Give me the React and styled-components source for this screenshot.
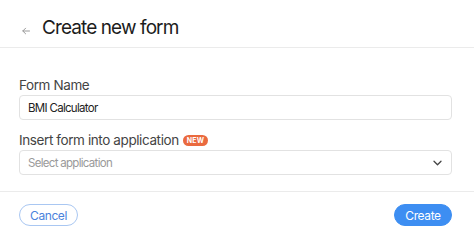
import React from "react";
import styled, { createGlobalStyle } from "styled-components";

const Global = createGlobalStyle`
  html, body { margin: 0; padding: 0; background: #ffffff; }
  body { font-family: Inter, "Noto Sans", "Liberation Sans", sans-serif; color: #222; }
  * { box-sizing: border-box; }
`;

const Page = styled.div`
  width: 474px;
  height: 237px;
  background: #fff;
  display: flex;
  flex-direction: column;
`;

const Header = styled.header`
  height: 48px;
  padding: 9px 0 0 21px;
  border-bottom: 1px solid #ebebeb;
  display: flex;
  align-items: center;
  gap: 11px;
`;

const BackButton = styled.button`
  border: none;
  background: none;
  padding: 0;
  width: 10px;
  height: 10px;
  display: flex;
  align-items: center;
  justify-content: center;
  color: #9a9a9a;
  margin-top: 5px;
  cursor: pointer;
`;

const Title = styled.h1`
  margin: 0;
  font-size: 19px;
  line-height: 24px;
  font-weight: 400;
  color: #1c1c1c;
  letter-spacing: -0.9px;
`;

const Form = styled.div`
  padding: 29px 22px 16px 19px;
  border-bottom: 1px solid #ebebeb;
  display: flex;
  flex-direction: column;
`;

const Label = styled.label`
  display: flex;
  align-items: center;
  gap: 4px;
  font-size: 13.5px;
  line-height: 17px;
  letter-spacing: -0.4px;
  color: #444;
  margin-top: ${(p) => (p.$first ? "0" : "12px")};
  margin-bottom: 1px;
`;

const Badge = styled.span`
  display: inline-flex;
  align-items: center;
  justify-content: center;
  height: 11px;
  padding: 0 4px;
  border-radius: 6px;
  background: #ea6a3f;
  color: #fff;
  font-size: 7px;
  font-weight: 700;
  letter-spacing: 0.2px;
  line-height: 1;
`;

const Field = styled.div`
  height: 25px;
  border: 1px solid #e2e2e2;
  border-radius: 4px;
  padding: 0 9px 0 8px;
  display: flex;
  align-items: center;
  justify-content: space-between;
  font-size: 11.5px;
  letter-spacing: -0.7px;
  color: ${(p) => (p.$placeholder ? "#9a9a9a" : "#222")};
`;

const Footer = styled.footer`
  padding: 12px 22px 0 19px;
  display: flex;
  justify-content: space-between;
`;

const Button = styled.button`
  height: 22px;
  width: ${(p) => (p.$primary ? "58px" : "59px")};
  border-radius: 11px;
  font-family: inherit;
  font-size: 12px;
  letter-spacing: -0.4px;
  padding: 0;
  cursor: pointer;
  border: 1px solid ${(p) => (p.$primary ? "#3d8ef2" : "#a9c7f2")};
  background: ${(p) => (p.$primary ? "#3d8ef2" : "#fff")};
  color: ${(p) => (p.$primary ? "#fff" : "#4a82dc")};
`;

export default function App() {
  return (
    <Page>
      <Global />
      <Header>
        <BackButton aria-label="Back">
          <svg width="8" height="8" viewBox="0 0 8 8" fill="none" stroke="currentColor" strokeWidth="1" strokeLinecap="round" strokeLinejoin="round">
            <path d="M7.5 4H0.8M3.6 1.2L0.8 4L3.6 6.8" />
          </svg>
        </BackButton>
        <Title>Create new form</Title>
      </Header>
      <Form>
        <Label $first>Form Name</Label>
        <Field>BMI Calculator</Field>
        <Label>
          Insert form into application <Badge>NEW</Badge>
        </Label>
        <Field $placeholder>
          Select application
          <svg width="9" height="6" viewBox="0 0 9 6" fill="none" stroke="#444" strokeWidth="1.3" strokeLinecap="round" strokeLinejoin="round">
            <path d="M1 1.2l3.5 3.5 3.5-3.5" />
          </svg>
        </Field>
      </Form>
      <Footer>
        <Button>Cancel</Button>
        <Button $primary>Create</Button>
      </Footer>
    </Page>
  );
}
